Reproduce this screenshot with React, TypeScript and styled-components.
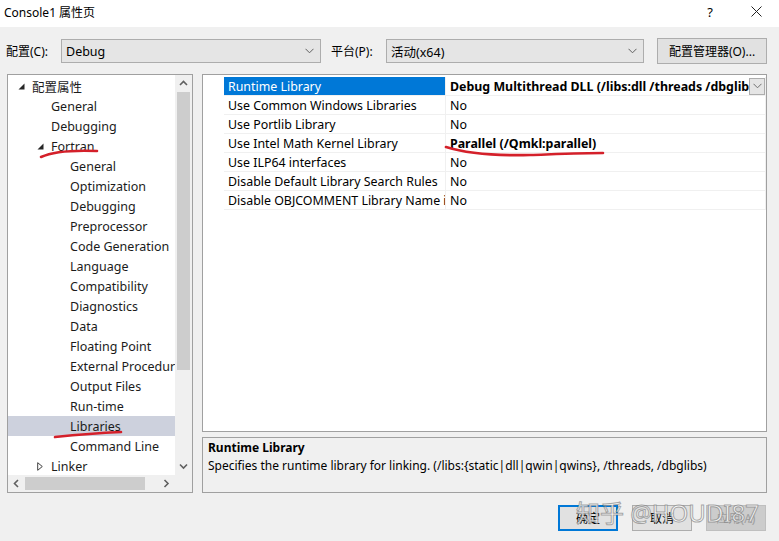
import React from 'react';
import styled, { createGlobalStyle, css } from 'styled-components';

const GlobalStyle = createGlobalStyle`
  html, body {
    margin: 0;
    padding: 0;
    background: #f0f0f0;
  }
  body {
    font-family: "Noto Sans", "Noto Sans CJK SC", sans-serif;
    font-size: 12px;
    color: #000;
  }
`;

const Window = styled.div`
  position: relative;
  width: 779px;
  height: 541px;
  background: #f0f0f0;
  display: flex;
  flex-direction: column;
  overflow: hidden;
`;

const TitleBar = styled.div`
  height: 27px;
  background: #fff;
  display: flex;
  align-items: center;
  padding-left: 4px;
  font-size: 12px;
  flex-shrink: 0;
`;

const TitleText = styled.span`
  margin-top: -3px;
`;

const TitleButtons = styled.div`
  margin-left: auto;
  display: flex;
  height: 100%;
`;

const TitleButton = styled.div`
  width: 46px;
  display: flex;
  align-items: center;
  justify-content: center;
  margin-top: -4px;
  font-size: 13px;
`;

const ConfigRow = styled.div`
  display: flex;
  align-items: center;
  height: 26px;
  margin: 11px 12px 0 6px;
`;

const Label = styled.span<{ $gap?: number }>`
  width: 55px;
  margin-left: ${(p) => p.$gap ?? 0}px;
`;

const Combo = styled.div<{ $width: number }>`
  width: ${(p) => p.$width}px;
  height: 24px;
  box-sizing: border-box;
  border: 1px solid #adadad;
  background: #e5e5e5;
  display: flex;
  align-items: center;
  padding: 0 6px 0 4px;
  font-size: 12.5px;
`;

const ComboText = styled.span`
  flex: 1;
`;

const PushButton = styled.div<{ $width: number; $variant?: 'default' | 'focus' | 'disabled' }>`
  width: ${(p) => p.$width}px;
  height: 26px;
  box-sizing: border-box;
  border: 1px solid #adadad;
  background: #e1e1e1;
  display: flex;
  align-items: center;
  justify-content: center;
  ${(p) =>
    p.$variant === 'focus' &&
    css`
      border: 2px solid #0078d7;
    `}
  ${(p) =>
    p.$variant === 'disabled' &&
    css`
      background: #cccccc;
      border-color: #bfbfbf;
      color: #a0a0a0;
    `}
`;

const Main = styled.div`
  display: flex;
  gap: 9px;
  height: 419px;
  margin: 10px 12px 0 7px;
`;

const TreePanel = styled.div`
  width: 186px;
  box-sizing: border-box;
  border: 1px solid #a0a0a0;
  background: #fff;
  display: grid;
  grid-template-columns: 1fr 17px;
  grid-template-rows: 1fr 17px;
`;

const TreeList = styled.div`
  overflow: hidden;
  padding-top: 1px;
  font-size: 12.5px;
`;

const TreeRow = styled.div<{ $level: number; $selected?: boolean }>`
  height: 20px;
  display: flex;
  align-items: center;
  white-space: nowrap;
  padding-left: ${(p) => 8 + p.$level * 19}px;
  background: ${(p) => (p.$selected ? '#cdd1dd' : 'transparent')};
  color: #1b1b1b;
`;

const Expander = styled.span`
  width: 16px;
  flex-shrink: 0;
  display: flex;
  align-items: center;
  justify-content: flex-start;
  padding-left: 2px;
  box-sizing: border-box;
`;

const VScroll = styled.div`
  background: #f0f0f0;
  display: flex;
  flex-direction: column;
  align-items: stretch;
`;

const HScroll = styled.div`
  background: #f0f0f0;
  display: flex;
  align-items: stretch;
`;

const Corner = styled.div`
  background: #f0f0f0;
`;

const ScrollArrow = styled.div`
  width: 17px;
  height: 17px;
  flex-shrink: 0;
  display: flex;
  align-items: center;
  justify-content: center;
`;

const VThumb = styled.div`
  height: 278px;
  margin: 0 2px;
  background: #cdcdcd;
`;

const HThumb = styled.div`
  width: 120px;
  margin: 2px 0;
  background: #cdcdcd;
`;

const Spacer = styled.div`
  flex: 1;
`;

const RightColumn = styled.div`
  flex: 1;
  display: flex;
  flex-direction: column;
  gap: 5px;
`;

const Grid = styled.div`
  height: 358px;
  box-sizing: border-box;
  border: 1px solid #a0a0a0;
  background: #fff;
  padding-top: 2px;
  font-size: 12.4px;
`;

const GridRow = styled.div`
  display: grid;
  grid-template-columns: 21px 222px 1fr;
  height: 19px;
`;

const Cell = styled.div<{ $selected?: boolean; $bold?: boolean }>`
  display: flex;
  align-items: center;
  padding-left: 4px;
  box-sizing: border-box;
  white-space: nowrap;
  overflow: hidden;
  border-bottom: 1px solid #f0f0f0;
  border-right: 1px solid #f0f0f0;
  background: ${(p) => (p.$selected ? '#0078d7' : '#fff')};
  color: ${(p) => (p.$selected ? '#fff' : '#000')};
  font-weight: ${(p) => (p.$bold ? 700 : 400)};
`;

const CellText = styled.span`
  flex: 1;
  overflow: hidden;
`;

const DropButton = styled.div`
  width: 16px;
  height: 17px;
  box-sizing: border-box;
  border: 1px solid #adadad;
  background: #e5e5e5;
  display: flex;
  align-items: center;
  justify-content: center;
  flex-shrink: 0;
`;

const Description = styled.div`
  flex: 1;
  box-sizing: border-box;
  border: 1px solid #a0a0a0;
  background: #f0f0f0;
  padding: 1px 5px;
  line-height: 18px;
`;

const DescTitle = styled.div`
  font-weight: 700;
`;

const ButtonRow = styled.div`
  display: flex;
  justify-content: flex-end;
  gap: 14px;
  margin: 12px 13px 0 0;
`;

const Watermark = styled.div`
  position: absolute;
  left: 576px;
  top: 494px;
  font-size: 24px;
  font-family: "Noto Sans", "Noto Sans CJK SC", sans-serif;
  color: rgba(255, 255, 255, 0.85);
  -webkit-text-stroke: 1px rgba(110, 110, 110, 0.6);
  white-space: nowrap;
  pointer-events: none;
`;

const Scribbles = styled.svg`
  position: absolute;
  left: 0;
  top: 0;
  pointer-events: none;
`;

const Chevron = ({ color = '#606060' }: { color?: string }) => (
  <svg width="9" height="6" viewBox="0 0 9 6">
    <path d="M0.5 0.8 L4.5 4.8 L8.5 0.8" fill="none" stroke={color} strokeWidth="1" />
  </svg>
);

const SmallArrow = ({ dir }: { dir: 'up' | 'down' | 'left' | 'right' }) => {
  const d = {
    up: 'M1 5 L4.5 1.5 L8 5',
    down: 'M1 1.5 L4.5 5 L8 1.5',
    left: 'M5 1 L1.5 4.5 L5 8',
    right: 'M1.5 1 L5 4.5 L1.5 8',
  }[dir];
  const vertical = dir === 'up' || dir === 'down';
  return (
    <svg width={vertical ? 9 : 7} height={vertical ? 7 : 9} viewBox={vertical ? '0 0 9 7' : '0 0 7 9'}>
      <path d={d} fill="none" stroke="#606060" strokeWidth="1.6" />
    </svg>
  );
};

const ExpandedGlyph = () => (
  <svg width="7" height="7" viewBox="0 0 7 7">
    <path d="M6.5 0.5 L6.5 6.5 L0.5 6.5 Z" fill="#262626" />
  </svg>
);

const CollapsedGlyph = () => (
  <svg width="6" height="9" viewBox="0 0 6 9">
    <path d="M0.7 0.7 L5.3 4.5 L0.7 8.3 Z" fill="none" stroke="#404040" strokeWidth="1" />
  </svg>
);

type TreeItem = { label: string; level: number; expander?: 'open' | 'closed'; selected?: boolean };

const treeItems: TreeItem[] = [
  { label: '配置属性', level: 0, expander: 'open' },
  { label: 'General', level: 1 },
  { label: 'Debugging', level: 1 },
  { label: 'Fortran', level: 1, expander: 'open' },
  { label: 'General', level: 2 },
  { label: 'Optimization', level: 2 },
  { label: 'Debugging', level: 2 },
  { label: 'Preprocessor', level: 2 },
  { label: 'Code Generation', level: 2 },
  { label: 'Language', level: 2 },
  { label: 'Compatibility', level: 2 },
  { label: 'Diagnostics', level: 2 },
  { label: 'Data', level: 2 },
  { label: 'Floating Point', level: 2 },
  { label: 'External Procedures', level: 2 },
  { label: 'Output Files', level: 2 },
  { label: 'Run-time', level: 2 },
  { label: 'Libraries', level: 2, selected: true },
  { label: 'Command Line', level: 2 },
  { label: 'Linker', level: 1, expander: 'closed' },
  { label: 'Resources', level: 1, expander: 'closed' },
];

type Prop = { name: string; value: string; bold?: boolean };

const properties: Prop[] = [
  { name: 'Runtime Library', value: 'Debug Multithread DLL (/libs:dll /threads /dbglibs)', bold: true },
  { name: 'Use Common Windows Libraries', value: 'No' },
  { name: 'Use Portlib Library', value: 'No' },
  { name: 'Use Intel Math Kernel Library', value: 'Parallel (/Qmkl:parallel)', bold: true },
  { name: 'Use ILP64 interfaces', value: 'No' },
  { name: 'Disable Default Library Search Rules', value: 'No' },
  { name: 'Disable OBJCOMMENT Library Name in Lib', value: 'No' },
];

export default function App() {
  return (
    <>
      <GlobalStyle />
      <Window>
        <TitleBar>
          <TitleText>Console1 属性页</TitleText>
          <TitleButtons>
            <TitleButton>?</TitleButton>
            <TitleButton>
              <svg width="11" height="11" viewBox="0 0 11 11">
                <path d="M0.5 0.5 L10.5 10.5 M10.5 0.5 L0.5 10.5" stroke="#222" strokeWidth="1" />
              </svg>
            </TitleButton>
          </TitleButtons>
        </TitleBar>

        <ConfigRow>
          <Label>配置(C):</Label>
          <Combo $width={260}>
            <ComboText>Debug</ComboText>
            <Chevron />
          </Combo>
          <Label $gap={10}>平台(P):</Label>
          <Combo $width={258}>
            <ComboText>活动(x64)</ComboText>
            <Chevron />
          </Combo>
          <Spacer />
          <PushButton $width={110}>配置管理器(O)...</PushButton>
        </ConfigRow>

        <Main>
          <TreePanel>
            <TreeList>
              {treeItems.map((item, i) => (
                <TreeRow key={i} $level={item.level} $selected={item.selected}>
                  <Expander>
                    {item.expander === 'open' && <ExpandedGlyph />}
                    {item.expander === 'closed' && <CollapsedGlyph />}
                  </Expander>
                  <span>{item.label}</span>
                </TreeRow>
              ))}
            </TreeList>
            <VScroll>
              <ScrollArrow>
                <SmallArrow dir="up" />
              </ScrollArrow>
              <VThumb />
              <Spacer />
              <ScrollArrow>
                <SmallArrow dir="down" />
              </ScrollArrow>
            </VScroll>
            <HScroll>
              <ScrollArrow>
                <SmallArrow dir="left" />
              </ScrollArrow>
              <HThumb />
              <Spacer />
              <ScrollArrow>
                <SmallArrow dir="right" />
              </ScrollArrow>
            </HScroll>
            <Corner />
          </TreePanel>

          <RightColumn>
            <Grid>
              {properties.map((p, i) => (
                <GridRow key={p.name}>
                  <span />
                  <Cell $selected={i === 0}>
                    <CellText>{p.name}</CellText>
                  </Cell>
                  <Cell $bold={p.bold}>
                    <CellText>{p.value}</CellText>
                    {i === 0 && (
                      <DropButton>
                        <Chevron color="#707070" />
                      </DropButton>
                    )}
                  </Cell>
                </GridRow>
              ))}
            </Grid>
            <Description>
              <DescTitle>Runtime Library</DescTitle>
              <div>
                Specifies the runtime library for linking. (/libs:{'{'}static|dll|qwin|qwins{'}'}, /threads, /dbglibs)
              </div>
            </Description>
          </RightColumn>
        </Main>

        <ButtonRow>
          <PushButton $width={60} $variant="focus">确定</PushButton>
          <PushButton $width={60}>取消</PushButton>
          <PushButton $width={60} $variant="disabled">应用(A)</PushButton>
        </ButtonRow>

        <Watermark>知乎 @HOUDI87</Watermark>

        <Scribbles width="779" height="541" viewBox="0 0 779 541">
          <g fill="none" stroke="#d4202a" strokeWidth="2.6" strokeLinecap="round">
            <path d="M41 157 C52 152 72 150 97 151" />
            <path d="M55 437 C75 435 100 433 121 432" />
            <path d="M446 147 C465 153 490 156 530 155 C560 154 585 153 603 153" />
          </g>
        </Scribbles>
      </Window>
    </>
  );
}
